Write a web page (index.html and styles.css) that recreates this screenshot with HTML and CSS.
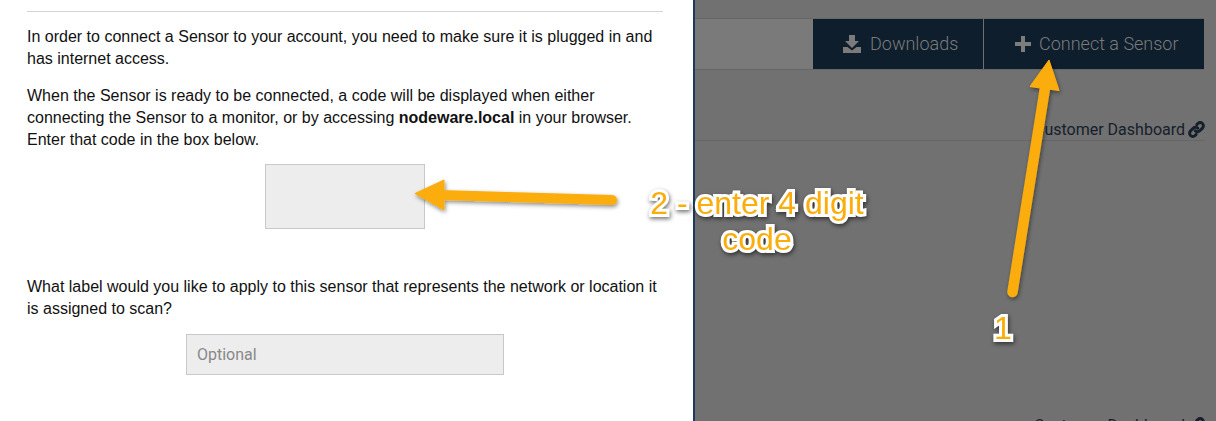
FILE: index.html
```html
<!DOCTYPE html>
<html lang="en">
<head>
<meta charset="utf-8">
<title>Connect a Sensor</title>
<link rel="stylesheet" href="styles.css">
</head>
<body>
<div class="page">
  <main class="modal">
    <hr class="rule">
    <p class="copy first">In order to connect a Sensor to your account, you need to make sure it is plugged in and has internet access.</p>
    <p class="copy second">When the Sensor is ready to be connected, a code will be displayed when either connecting the Sensor to a monitor, or by accessing <b>nodeware.local</b> in your browser. Enter that code in the box below.</p>
    <div class="code-box"></div>
    <p class="copy third">What label would you like to apply to this sensor that represents the network or location it is assigned to scan?</p>
    <div class="optional">Optional</div>
  </main>
  <section class="backdrop">
    <div class="toolbar">
      <div class="tool downloads">
        <svg class="icon-dl" viewBox="0 0 18 18"><path d="M6 0h6v6h4l-7 7-7-7h4z"/><path d="M0 12h4.500l4.500 3.500 4.500-3.500h4.500v6h-18z"/></svg>
        <span>Downloads</span>
      </div>
      <div class="tool connect">
        <svg class="icon-plus" viewBox="0 0 16 16"><path d="M6 0h4v6h6v4h-6v6h-4v-6h-6v-4h6z"/></svg>
        <span>Connect a Sensor</span>
      </div>
    </div>
    <div class="dash-link">
      <span>Customer Dashboard</span>
      <svg class="icon-link" viewBox="0 0 16 16"><g fill="none" stroke="#16202c" stroke-width="2.800" stroke-linecap="round"><path d="M6.800 9.200a3 3 0 0 0 4.300 0l2.500-2.500a3 3 0 0 0-4.300-4.300l-1 1"/><path d="M9.200 6.800a3 3 0 0 0-4.300 0l-2.500 2.500a3 3 0 0 0 4.300 4.300l1-1"/></g></svg>
    </div>
    <hr class="dash-rule">
    <div class="dash-link lower">
      <span>Customer Dashboard</span>
      <svg class="icon-link" viewBox="0 0 16 16"><g fill="none" stroke="#16202c" stroke-width="2.800" stroke-linecap="round"><path d="M6.800 9.200a3 3 0 0 0 4.300 0l2.500-2.500a3 3 0 0 0-4.300-4.300l-1 1"/><path d="M9.200 6.800a3 3 0 0 0-4.300 0l-2.500 2.500a3 3 0 0 0 4.300 4.300l1-1"/></g></svg>
    </div>
  </section>
</div>
<svg class="arrows" viewBox="0 0 1216 421" width="1216" height="421">
  <defs>
    <filter id="shadow" x="-20%" y="-20%" width="140%" height="140%"><feDropShadow dx="1" dy="2" stdDeviation="2" flood-color="#000" flood-opacity=".45"/></filter>
  </defs>
  <g filter="url(#shadow)" fill="#fbad0b" stroke="#fbad0b">
    <path d="M1012.500 292L1045 88" stroke-width="10.500" stroke-linecap="round" fill="none"/>
    <path d="M1049 60L1030 86.500L1059 90.500Z" stroke-width="1"/>
    <path d="M612 200L440 195" stroke-width="10" stroke-linecap="round" fill="none"/>
    <path d="M415 193.500L444 180L444 210Z" stroke-width="1"/>
  </g>
</svg>
<div class="note note-two">2 - enter 4 digit<br>code</div>
<div class="note note-one">1</div>
</body>
</html>
```
FILE: styles.css
```css
html, body {
  margin: 0;
  padding: 0;
  width: 1216px;
  height: 421px;
  overflow: hidden;
  background: #717171;
}
.page {
  display: flex;
  width: 1216px;
  height: 421px;
  overflow: hidden;
}
.modal {
  box-sizing: border-box;
  width: 695px;
  flex: none;
  padding: 11px 27px 0;
  background: #fff;
  border-right: 2px solid #1d3a5c;
  font: 16px/22px "Liberation Sans", Arial, sans-serif;
  color: #111;
}
.rule {
  margin: 0;
  border: 0;
  border-top: 1px solid #d4d4d4;
  width: 636px;
}
.copy { margin: 0; width: 636px; }
.first { margin-top: 14px; }
.second { margin-top: 15px; }
.third { margin-top: 47px; }
.code-box {
  box-sizing: border-box;
  width: 160px;
  height: 65px;
  margin: 13px 0 0 238px;
  background: #ededed;
  border: 1px solid #c8c8c8;
}
.optional {
  box-sizing: border-box;
  width: 318px;
  height: 41px;
  margin: 14px 0 0 159px;
  padding-left: 10px;
  background: #ededed;
  border: 1px solid #c8c8c8;
  font: 16px/39px Roboto, sans-serif;
  color: #888;
}
.backdrop {
  flex: 1;
  background: #717171;
  min-width: 0;
  position: relative;
}
.toolbar {
  box-sizing: border-box;
  display: flex;
  justify-content: flex-end;
  height: 52px;
  margin-top: 18px;
  margin-right: 12px;
  border-top: 1px solid #676767;
  border-bottom: 1px solid #666;
  background: #7a7a7a;
}
.tool {
  display: flex;
  align-items: center;
  height: 50px;
  background: #0e1e2d;
  color: #7b7b7b;
  font: 300 18px Roboto, sans-serif;
}
.tool span { padding-bottom: 2px; }
.downloads { width: 171px; padding-left: 30px; box-sizing: border-box; gap: 9px; border-right: 1px solid #6f6f6f; }
.connect { width: 220px; padding-left: 31px; box-sizing: border-box; gap: 8px; }
.icon-dl { width: 18px; height: 18px; fill: #7b7b7b; }
.icon-plus { width: 16px; height: 16px; fill: #7d7d7d; }
.dash-link {
  display: flex;
  justify-content: flex-end;
  align-items: center;
  gap: 3px;
  margin: 48px 11px 0 0;
  height: 22px;
  font: 16px Roboto, sans-serif;
  color: #16202c;
}
.icon-link { width: 17px; height: 17px; }
.dash-rule {
  margin: 0 11px 0 0;
  border: 0;
  border-top: 1px solid #666;
}
.lower { margin-top: 273px; }
.arrows {
  position: absolute;
  left: 0;
  top: 0;
  pointer-events: none;
}
.note {
  position: absolute;
  font: 32px/36px "Liberation Sans", Arial, sans-serif;
  color: #fbad0b;
  text-align: center;
  -webkit-text-stroke: 6px #fff;
  paint-order: stroke fill;
  filter: drop-shadow(1px 2px 2px rgba(0,0,0,.55));
}
.note-two { left: 627px; top: 185px; width: 260px; }
.note-one { left: 991px; top: 310px; width: 24px; }
```
